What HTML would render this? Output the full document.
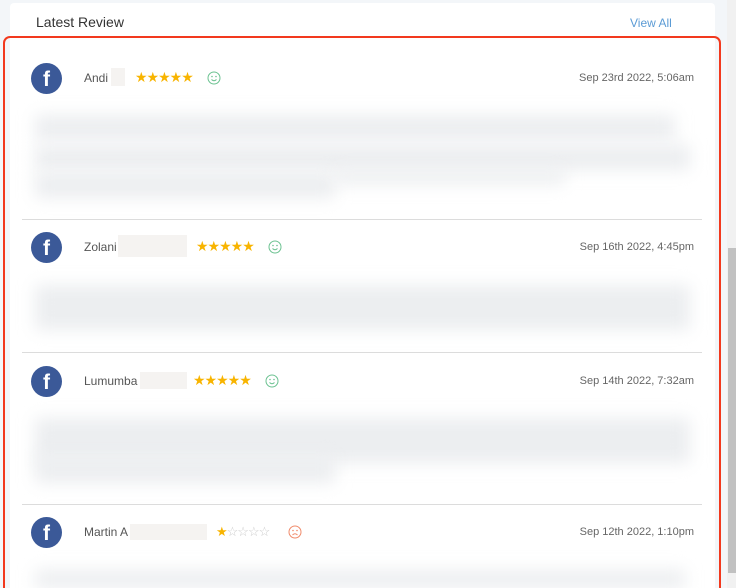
<!DOCTYPE html>
<html style="width:736px;height:588px;overflow:hidden"><head><meta charset="utf-8"><style>
*{margin:0;padding:0;box-sizing:border-box}
body{width:736px;height:588px;overflow:hidden;background:#f3f6f9;font-family:"Liberation Sans",sans-serif;position:relative}
.card{position:absolute;left:10px;top:3px;width:705px;height:585px;background:#fff;border-radius:4px 4px 0 0}
.title{position:absolute;left:36px;top:14px;font-size:14px;color:#333}
.va{position:absolute;left:630px;top:16px;font-size:12px;color:#5b9bd5}
.red{position:absolute;left:3px;top:36px;width:718px;height:552px;border:2px solid #f2391e;border-bottom:none;border-radius:7px 7px 0 0}
.a{position:absolute}
.fb{position:absolute;width:31px;height:31px;border-radius:50%;background:#3b5998;left:31px;color:#fff;font-weight:bold;font-size:21px;text-align:center;line-height:34px;font-family:"Liberation Sans",sans-serif}
.nm{position:absolute;left:84px;font-size:12px;color:#555}
.ph{position:absolute;background:#f5f3f1}
.st{position:absolute;color:#f8b400;font-size:14px;letter-spacing:-1px}
.sm{position:absolute;width:14px;height:14px}
.dt{position:absolute;right:42px;font-size:11px;color:#666}
.bl{position:absolute;background:#eceef0;filter:blur(8px)}
.hr{position:absolute;left:22px;width:680px;height:1px;background:#dcdcdc}
</style></head><body>
<div class="card"></div>
<div class="title">Latest Review</div>
<div class="va">View All</div>

<div class="fb" style="top:63px">f</div>
<div class="nm" style="top:71px">Andi</div>
<div class="ph" style="left:111px;top:68px;width:14px;height:18px"></div>
<div class="st" style="left:135px;top:69px">★★★★★</div>
<svg class="sm" style="left:207px;top:71px" viewBox="0 0 14 14"><circle cx="7" cy="7" r="6" fill="none" stroke="#6cc291"/><circle cx="5" cy="5.5" r=".8" fill="#6cc291"/><circle cx="9" cy="5.5" r=".8" fill="#6cc291"/><path d="M4.5 8.5q2.5 2.5 5 0" fill="none" stroke="#6cc291"/></svg>
<div class="dt" style="top:72px">Sep 23rd 2022, 5:06am</div>
<div class="bl" style="left:35px;top:115px;width:640px;height:25px"></div>
<div class="bl" style="left:35px;top:145px;width:655px;height:25px"></div>
<div class="bl" style="left:35px;top:172px;width:300px;height:26px"></div>
<div class="bl" style="left:335px;top:170px;width:230px;height:14px"></div>
<div class="hr" style="top:219px"></div>

<div class="fb" style="top:232px">f</div>
<div class="nm" style="top:240px">Zolani</div>
<div class="ph" style="left:118px;top:235px;width:69px;height:22px"></div>
<div class="st" style="left:196px;top:238px">★★★★★</div>
<svg class="sm" style="left:268px;top:240px" viewBox="0 0 14 14"><circle cx="7" cy="7" r="6" fill="none" stroke="#6cc291"/><circle cx="5" cy="5.5" r=".8" fill="#6cc291"/><circle cx="9" cy="5.5" r=".8" fill="#6cc291"/><path d="M4.5 8.5q2.5 2.5 5 0" fill="none" stroke="#6cc291"/></svg>
<div class="dt" style="top:241px">Sep 16th 2022, 4:45pm</div>
<div class="bl" style="left:35px;top:285px;width:655px;height:45px"></div>
<div class="hr" style="top:352px"></div>

<div class="fb" style="top:366px">f</div>
<div class="nm" style="top:374px">Lumumba</div>
<div class="ph" style="left:140px;top:372px;width:47px;height:17px"></div>
<div class="st" style="left:193px;top:372px">★★★★★</div>
<svg class="sm" style="left:265px;top:374px" viewBox="0 0 14 14"><circle cx="7" cy="7" r="6" fill="none" stroke="#6cc291"/><circle cx="5" cy="5.5" r=".8" fill="#6cc291"/><circle cx="9" cy="5.5" r=".8" fill="#6cc291"/><path d="M4.5 8.5q2.5 2.5 5 0" fill="none" stroke="#6cc291"/></svg>
<div class="dt" style="top:375px">Sep 14th 2022, 7:32am</div>
<div class="bl" style="left:35px;top:418px;width:655px;height:45px"></div>
<div class="bl" style="left:35px;top:455px;width:300px;height:28px"></div>
<div class="hr" style="top:504px"></div>

<div class="fb" style="top:517px">f</div>
<div class="nm" style="top:525px">Martin A</div>
<div class="ph" style="left:130px;top:524px;width:77px;height:16px"></div>
<div class="st" style="left:216px;top:524px;font-size:13px"><span>★</span><span style="color:#ccc">☆☆☆☆</span></div>
<svg class="sm" style="left:288px;top:525px" viewBox="0 0 14 14"><circle cx="7" cy="7" r="6" fill="none" stroke="#f08a6a"/><circle cx="5" cy="5.5" r=".8" fill="#f08a6a"/><circle cx="9" cy="5.5" r=".8" fill="#f08a6a"/><path d="M4.5 10q2.5 -2.5 5 0" fill="none" stroke="#f08a6a"/></svg>
<div class="dt" style="top:526px">Sep 12th 2022, 1:10pm</div>
<div class="bl" style="left:35px;top:570px;width:650px;height:18px"></div>

<div class="red"></div>
<div class="a" style="left:727px;top:0;width:9px;height:588px;background:#f1f1f1"></div>
<div class="a" style="left:728px;top:248px;width:8px;height:325px;background:#c1c1c1"></div>
</body></html>
